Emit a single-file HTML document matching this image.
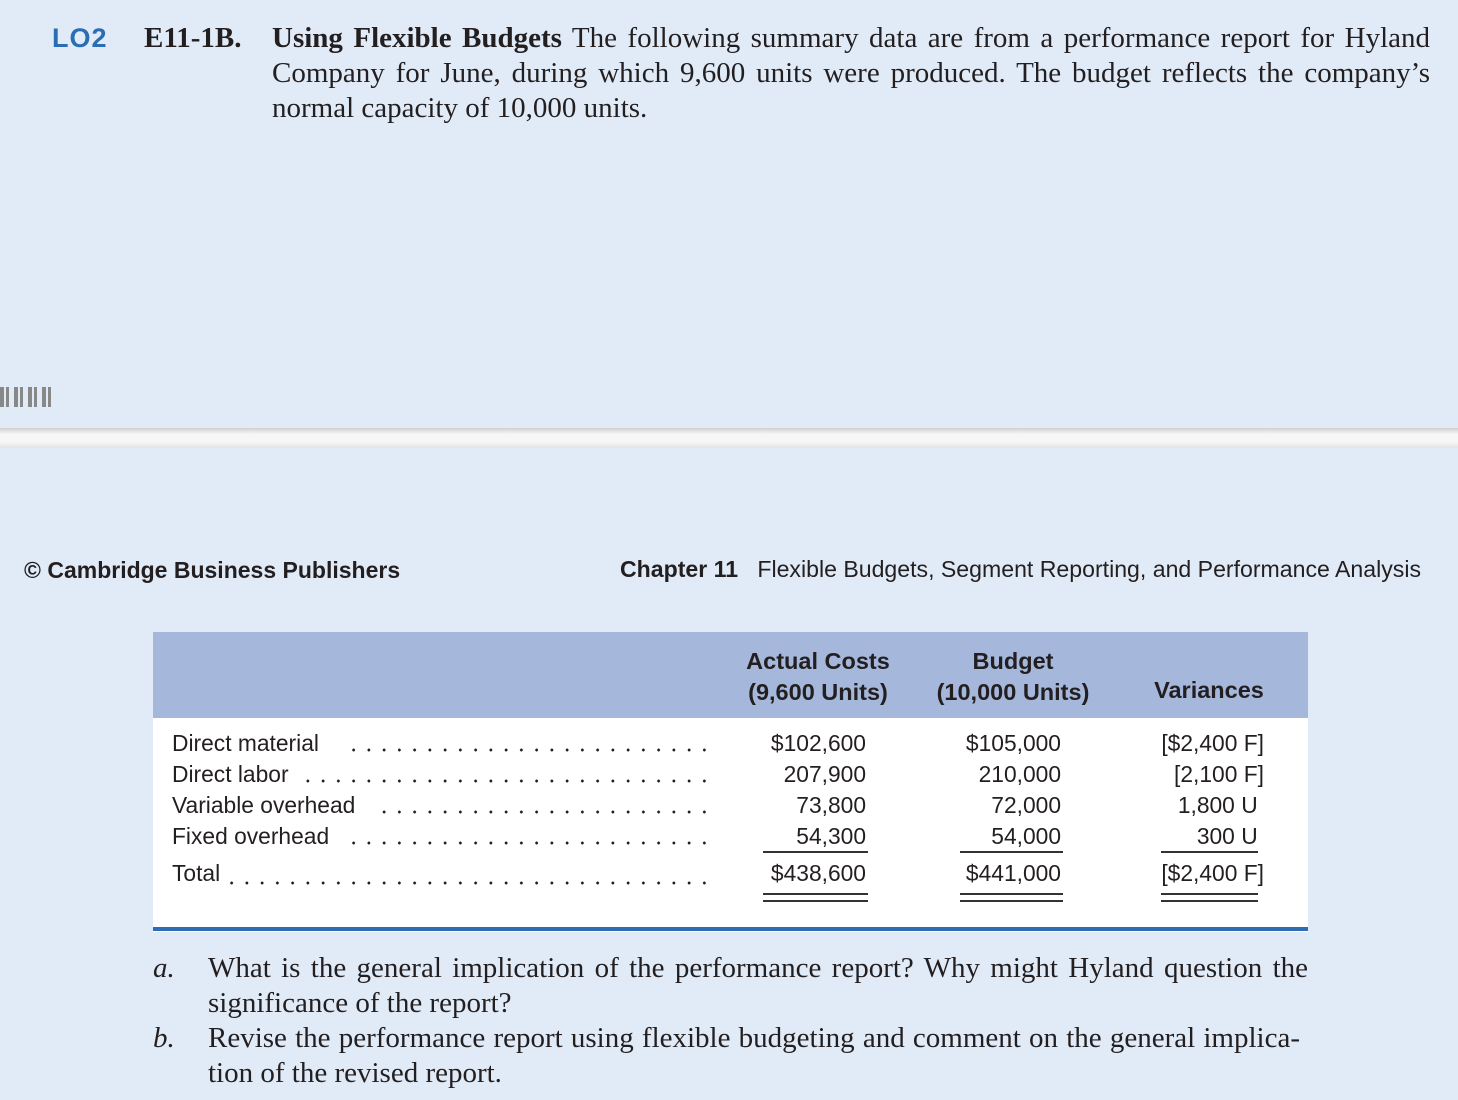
<!DOCTYPE html>
<html><head><meta charset="utf-8"><style>
*{margin:0;padding:0;box-sizing:border-box}
body{width:1458px;height:1100px;background:#e0ebf7;position:relative;overflow:hidden;color:#231f20}
.a{position:absolute;white-space:nowrap}
.s{font-family:"Liberation Serif",serif;font-size:29px}
.h{font-family:"Liberation Sans",sans-serif;font-size:22.8px}
.line{position:absolute;left:272px;width:1158px;text-align:justify;text-align-last:justify;font-family:"Liberation Serif",serif;font-size:29px;white-space:nowrap;line-height:35px}
.r{text-align:right}
.dots{position:absolute;height:6px;background-image:radial-gradient(circle,#231f20 1.3px,transparent 1.6px);background-size:15.25px 6px;background-position:right 0 top 0;background-repeat:repeat-x}
.ul{position:absolute;height:2px;background:#333}
</style></head><body>
<div class="a" style="left:52px;top:23px;font-family:'Liberation Sans',sans-serif;font-weight:bold;font-size:27px;letter-spacing:1px;color:#2a6db5">LO2</div>
<div class="a s" style="left:144px;top:21px;font-weight:bold;line-height:35px">E11-1B.</div>
<div class="line" style="top:21px"><b>Using Flexible Budgets</b> The following summary data are from a performance report for Hyland</div>
<div class="line" style="top:56px">Company for June, during which 9,600 units were produced. The budget reflects the company’s</div>
<div class="a s" style="left:272px;top:91px;line-height:35px">normal capacity of 10,000 units.</div>

<div class="a" style="left:0;top:387px;width:56px;height:20px;background:repeating-linear-gradient(90deg,#888 0 4px,transparent 4px 6px,#888 6px 9px,transparent 9px 14px)"></div>
<div class="a" style="left:0;top:428px;width:1458px;height:20px;background:linear-gradient(#cfcfcf,#f6f6f6 30%,#f6f6f6 70%,#e3e3e3)"></div>

<div class="a h" style="left:24px;top:557px;font-weight:bold;font-size:23px">© Cambridge Business Publishers</div>
<div class="a h" style="left:620px;top:556px;font-size:23.1px"><b>Chapter 11</b>&nbsp;&nbsp;&nbsp;Flexible Budgets, Segment Reporting, and Performance Analysis</div>

<div class="a" style="left:153px;top:632px;width:1155px;height:300px;background:#fff"></div>
<div class="a" style="left:153px;top:632px;width:1155px;height:86px;background:#a5b8dc"></div>
<div class="a" style="left:153px;top:927px;width:1155px;height:4px;background:#2e6db4"></div>

<div class="a h" style="left:718px;top:646px;width:200px;text-align:center;font-weight:bold;line-height:31px;font-size:23.5px">Actual Costs<br>(9,600 Units)</div>
<div class="a h" style="left:913px;top:646px;width:200px;text-align:center;font-weight:bold;line-height:31px;font-size:23.5px">Budget<br>(10,000 Units)</div>
<div class="a h" style="left:1109px;top:677px;width:200px;text-align:center;font-weight:bold;font-size:23.5px">Variances</div>

<div class="a h" style="left:172px;top:728px;line-height:31px">Direct material<br>Direct labor<br>Variable overhead<br>Fixed overhead</div>
<div class="a h" style="left:172px;top:860px">Total</div>
<div class="dots" style="left:342px;width:370px;top:747px"></div>
<div class="dots" style="left:298px;width:414px;top:778px"></div>
<div class="dots" style="left:382px;width:330px;top:809px"></div>
<div class="dots" style="left:340px;width:372px;top:840px"></div>
<div class="dots" style="left:228px;width:484px;top:880px"></div>

<div class="a h r" style="left:700px;width:166px;top:728px;line-height:31px">$102,600<br>207,900<br>73,800<br>54,300</div>
<div class="a h r" style="left:700px;width:166px;top:860px">$438,600</div>
<div class="a h r" style="left:900px;width:161px;top:728px;line-height:31px">$105,000<br>210,000<br>72,000<br>54,000</div>
<div class="a h r" style="left:900px;width:161px;top:860px">$441,000</div>
<div class="a h r" style="left:1100px;width:164px;top:728px;line-height:31px">[$2,400 F]<br>[2,100 F]<br>1,800 U&nbsp;<br>300 U&nbsp;</div>
<div class="a h r" style="left:1100px;width:164px;top:860px">[$2,400 F]</div>

<div class="ul" style="left:763px;width:105px;top:851px"></div>
<div class="ul" style="left:960px;width:103px;top:851px"></div>
<div class="ul" style="left:1161px;width:97px;top:851px"></div>
<div class="ul" style="left:763px;width:105px;top:893px"></div>
<div class="ul" style="left:960px;width:103px;top:893px"></div>
<div class="ul" style="left:1161px;width:97px;top:893px"></div>
<div class="ul" style="left:763px;width:105px;top:900px"></div>
<div class="ul" style="left:960px;width:103px;top:900px"></div>
<div class="ul" style="left:1161px;width:97px;top:900px"></div>

<div class="a s" style="left:153px;top:951px;font-style:italic;line-height:35px">a.</div>
<div class="line" style="left:208px;width:1100px;top:951px">What is the general implication of the performance report? Why might Hyland question the</div>
<div class="a s" style="left:208px;top:986px;line-height:35px">significance of the report?</div>
<div class="a s" style="left:153px;top:1021px;font-style:italic;line-height:35px">b.</div>
<div class="line" style="left:208px;width:1092px;top:1021px">Revise the performance report using flexible budgeting and comment on the general implica-</div>
<div class="a s" style="left:208px;top:1056px;line-height:35px">tion of the revised report.</div>
</body></html>
